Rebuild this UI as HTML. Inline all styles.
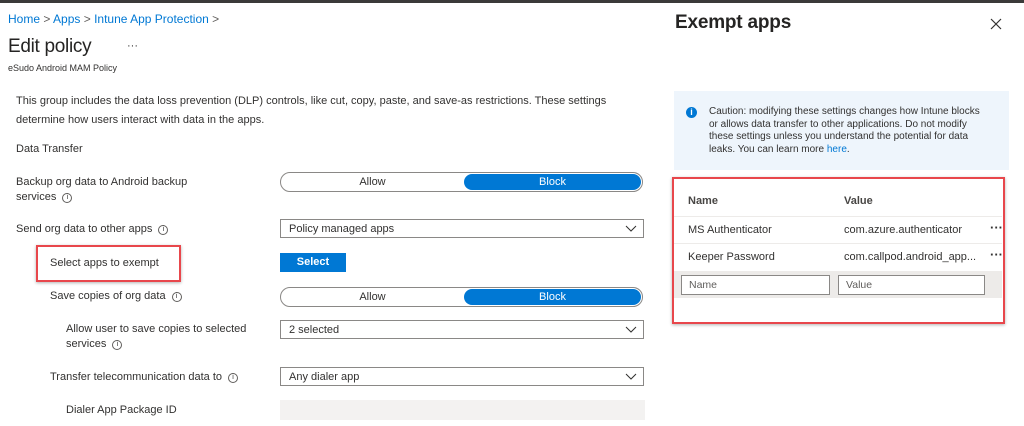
<!DOCTYPE html>
<html><head><style>
body{margin:0;width:1024px;height:426px;background:#fff;position:relative;overflow:hidden;font-family:"Liberation Sans",sans-serif;color:#323130}
.a{position:absolute;white-space:nowrap}
.t{font-size:11px}
.tog{position:absolute;left:280px;width:361px;height:18px;border:1px solid #8a8886;border-radius:10px;font-size:11px}
.tog .al{position:absolute;left:0;width:183px;text-align:center;top:3px}
.tog .bl{position:absolute;left:183px;right:1px;top:1px;bottom:1px;background:#0078d4;color:#fff;border-radius:9px;text-align:center;line-height:16px}
.dd{position:absolute;left:280px;width:364px;height:19px;border:1px solid #8a8886;font-size:11px;box-sizing:border-box;padding:3px 8px}
.dd svg{position:absolute;right:6px;top:5px}
.i{display:inline-block;width:8px;height:8px;border:1px solid #605e5c;border-radius:50%;font-size:7px;line-height:8px;text-align:center;margin-left:6px;vertical-align:1px}
.red{position:absolute;border:2px solid #e8474c;box-shadow:0 1px 3px rgba(0,0,0,.3)}
.inp{position:absolute;top:275px;width:149px;height:20px;box-sizing:border-box;background:#fff;border:1px solid #8a8886;font-size:10.5px;color:#605e5c;padding-left:7px;line-height:18px}
</style></head><body>
<div class="a" style="left:0;top:0;width:1024px;height:3px;background:#3b3a39"></div>
<div class="a" style="left:8px;top:12px;font-size:12px;color:#0078d4">Home <span style="color:#605e5c">&gt;</span> Apps <span style="color:#605e5c">&gt;</span> Intune App Protection <span style="color:#605e5c">&gt;</span></div>
<div class="a" style="left:8px;top:36px;font-size:19px;color:#252423;letter-spacing:-0.3px">Edit policy</div>
<div class="a" style="left:127px;top:40px;font-size:11px">···</div>
<div class="a" style="left:8px;top:63px;font-size:9px">eSudo Android MAM Policy</div>
<div class="a t" style="left:16px;top:95px">This group includes the data loss prevention (DLP) controls, like cut, copy, paste, and save-as restrictions. These settings</div>
<div class="a t" style="left:16px;top:114px">determine how users interact with data in the apps.</div>
<div class="a t" style="left:16px;top:143px">Data Transfer</div>
<div class="a t" style="left:16px;top:176px">Backup org data to Android backup</div>
<div class="a t" style="left:16px;top:191px">services<span class="i">i</span></div>
<div class="tog" style="top:172px"><span class="al">Allow</span><span class="bl">Block</span></div>
<div class="a t" style="left:16px;top:223px">Send org data to other apps<span class="i">i</span></div>
<div class="dd" style="top:219px">Policy managed apps<svg width="12" height="8"><path d="M1 1l5 5 5-5" stroke="#323130" fill="none"/></svg></div>
<div class="red" style="left:36px;top:245px;width:141px;height:33px"></div>
<div class="a t" style="left:50px;top:257px">Select apps to exempt</div>
<div class="a" style="left:280px;top:253px;width:66px;height:19px;background:#0078d4;color:#fff;font-size:11px;font-weight:bold;text-align:center;line-height:19px">Select</div>
<div class="a t" style="left:50px;top:290px">Save copies of org data<span class="i">i</span></div>
<div class="tog" style="top:287px"><span class="al">Allow</span><span class="bl">Block</span></div>
<div class="a t" style="left:66px;top:323px">Allow user to save copies to selected</div>
<div class="a t" style="left:66px;top:338px">services<span class="i">i</span></div>
<div class="dd" style="top:320px">2 selected<svg width="12" height="8"><path d="M1 1l5 5 5-5" stroke="#323130" fill="none"/></svg></div>
<div class="a t" style="left:50px;top:371px">Transfer telecommunication data to<span class="i">i</span></div>
<div class="dd" style="top:367px">Any dialer app<svg width="12" height="8"><path d="M1 1l5 5 5-5" stroke="#323130" fill="none"/></svg></div>
<div class="a t" style="left:66px;top:404px">Dialer App Package ID</div>
<div class="a" style="left:280px;top:400px;width:365px;height:20px;background:#f3f2f1"></div>

<div class="a" style="left:675px;top:12px;font-size:19px;color:#252423;font-weight:bold;letter-spacing:-0.2px">Exempt apps</div>
<svg class="a" style="left:990px;top:18px" width="12" height="12"><path d="M1 1l10 10M11 1L1 11" stroke="#323130" stroke-width="1.2"/></svg>
<div class="a" style="left:674px;top:91px;width:335px;height:79px;background:#eef5fc"></div>
<div class="a" style="left:686px;top:107px;width:11px;height:11px;border-radius:50%;background:#0078d4;color:#fff;font-size:9px;font-weight:bold;text-align:center;line-height:11px">i</div>
<div class="a" style="left:709px;top:106px;font-size:10px;line-height:12.6px">Caution: modifying these settings changes how Intune blocks<br>or allows data transfer to other applications. Do not modify<br>these settings unless you understand the potential for data<br>leaks. You can learn more <span style="color:#0078d4">here</span>.</div>
<div class="red" style="left:672px;top:177px;width:329px;height:143px"></div>
<div class="a" style="left:688px;top:195px;font-size:11px;font-weight:bold;color:#484644">Name</div>
<div class="a" style="left:844px;top:195px;font-size:11px;font-weight:bold;color:#484644">Value</div>
<div class="a" style="left:674px;top:216px;width:328px;height:1px;background:#edebe9"></div>
<div class="a t" style="left:688px;top:224px">MS Authenticator</div>
<div class="a t" style="left:844px;top:224px">com.azure.authenticator</div>
<div class="a" style="left:990px;top:220px;font-size:13px;font-weight:bold;line-height:16px">···</div>
<div class="a" style="left:674px;top:243px;width:328px;height:1px;background:#edebe9"></div>
<div class="a t" style="left:688px;top:251px">Keeper Password</div>
<div class="a t" style="left:844px;top:251px">com.callpod.android_app...</div>
<div class="a" style="left:990px;top:247px;font-size:13px;font-weight:bold;line-height:16px">···</div>
<div class="a" style="left:674px;top:271px;width:328px;height:27px;background:#edebe9"></div>
<div class="inp" style="left:681px">Name</div>
<div class="inp" style="left:838px;width:147px">Value</div>
</body></html>
